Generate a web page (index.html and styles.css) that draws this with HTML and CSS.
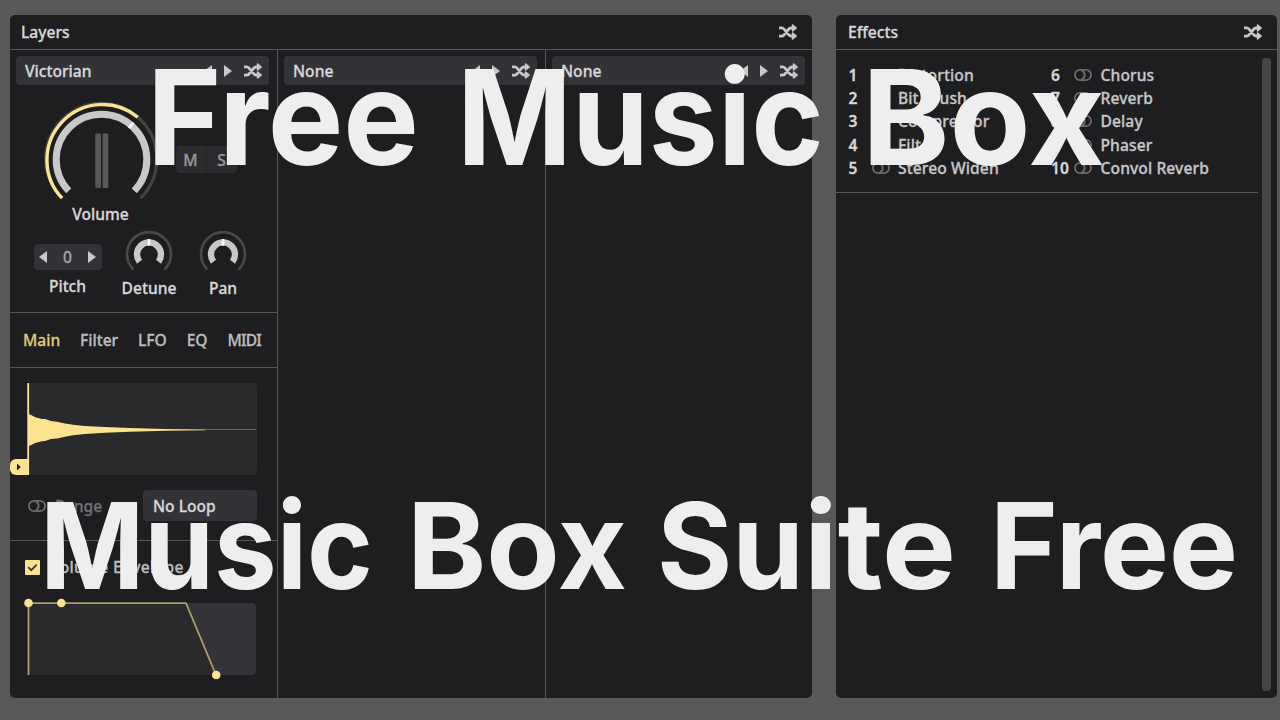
FILE: index.html
```html
<!DOCTYPE html>
<html lang="en">
<head>
    <meta charset="UTF-8">
    <meta name="viewport" content="width=device-width, initial-scale=1.0">
    <title>Free Music Box</title>
    <link rel="stylesheet" href="styles.css">
</head>
<body>

<!-- shared icons -->
<svg class="defs">
    <symbol id="shuffle" viewBox="0 0 18 16">
        <path d="M0 3.9h2.8c1.4 0 2 .8 2.9 2l3.4 4.2c.9 1.2 1.6 1.9 3 1.9H14M0 12.1h2.8c1.4 0 2-.8 2.9-2l3.4-4.2c.9-1.2 1.6-1.9 3-1.9H14" fill="none" stroke="currentColor" stroke-width="2.8"/>
        <path d="M13.6 1l3.6 3-3.6 3zM13.6 9l3.6 3-3.6 3z" fill="currentColor" stroke="currentColor" stroke-width="1.6" stroke-linejoin="round"/>
    </symbol>
    <symbol id="toggle" viewBox="0 0 18 12">
        <rect x=".9" y=".9" width="16.2" height="10.2" rx="5.1" fill="none" stroke="currentColor" stroke-width="1.8"/>
        <path d="M7.6 1.4a5 5 0 0 1 0 9.2" fill="none" stroke="currentColor" stroke-width="1.8"/>
    </symbol>
    <symbol id="prev" viewBox="0 0 8 12"><path d="M8 0v12L0 6z" fill="currentColor"/></symbol>
    <symbol id="next" viewBox="0 0 8 12"><path d="M0 0v12l8-6z" fill="currentColor"/></symbol>
    <symbol id="knob" viewBox="0 0 48 42">
        <path d="M8.4 38.6a22 22 0 1 1 31.2 0" fill="none" stroke="#49494b" stroke-width="2.6"/>
        <path d="M14.5 30.7a12 12 0 1 1 19 0" fill="none" stroke="#c8c8ca" stroke-width="6.4"/>
        <path d="M24 8v6.6" stroke="#fff" stroke-width="2.6"/>
    </symbol>
</svg>

<div class="panel layers">
    <div class="panel-header">
        <span>Layers</span>
        <svg class="shuffle"><use href="#shuffle"/></svg>
    </div>
    <div class="columns">
        <div class="column">
            <div class="preset">
                <span>Victorian</span>
                <svg class="arrow"><use href="#prev"/></svg>
                <svg class="arrow"><use href="#next"/></svg>
                <svg class="shuffle"><use href="#shuffle"/></svg>
            </div>

            <div class="knobs">
                <div class="volume-row">
                    <div class="volume">
                        <svg width="120" height="104" viewBox="0 0 120 104">
                            <path d="M21.1 99.2a55.5 55.5 0 1 1 78.4 0" fill="none" stroke="#434345" stroke-width="3.2"/>
                            <path d="M21.1 99.2A55.5 55.5 0 0 1 96.8 18.3" fill="none" stroke="#fbe38f" stroke-width="3.4"/>
                            <path d="M27.7 91.9a45.3 45.3 0 1 1 65.6 0" fill="none" stroke="#c8c8ca" stroke-width="7"/>
                            <path d="M87.8 28.8l4.8-5.2" stroke="#fff" stroke-width="2.6"/>
                            <rect x="54.3" y="34.5" width="5.7" height="54.5" rx="1" fill="#59595a"/>
                            <rect x="61.6" y="34.5" width="5.7" height="54.5" rx="1" fill="#59595a"/>
                        </svg>
                        <span>Volume</span>
                    </div>
                    <div class="mute-solo">
                        <span>M</span>
                        <span>S</span>
                    </div>
                </div>
                <div class="small-knobs">
                    <div class="control pitch">
                        <div class="stepper">
                            <svg class="arrow"><use href="#prev"/></svg>
                            <span>0</span>
                            <svg class="arrow"><use href="#next"/></svg>
                        </div>
                        <span>Pitch</span>
                    </div>
                    <div class="control">
                        <svg class="knob"><use href="#knob"/></svg>
                        <span>Detune</span>
                    </div>
                    <div class="control">
                        <svg class="knob"><use href="#knob"/></svg>
                        <span>Pan</span>
                    </div>
                </div>
            </div>

            <div class="tabs">
                <span class="active">Main</span>
                <span>Filter</span>
                <span>LFO</span>
                <span>EQ</span>
                <span>MIDI</span>
            </div>

            <div class="sample">
                <div class="waveform">
                    <svg width="228" height="92" viewBox="0 0 228 92">
                        <path d="M0 46.5h228" stroke="#6b675a" stroke-width="1"/>
                        <path d="M0 30.5l3 1.5 5 2.4 6 1.5 3 .2 6 2 6 .7 8 1.7 8 1.2 12 1.2 20 1.2 25 1 35 1 40 .7v.4l-40 .6-35 .9-25 1-20 1.4-12 1.2-8 1.5-8 1.6-6 .6-6 2-3 .3-6 1.4-5 2.2-3 1.6z" fill="#fbe38f"/>
                        <path d="M.2 0v92" stroke="#fbe38f" stroke-width="1.8"/>
                    </svg>
                    <svg class="start-handle" width="19" height="16" viewBox="0 0 19 16">
                        <path d="M19 0H6a6 6 0 0 0-6 6v4a6 6 0 0 0 6 6h13z" fill="#fbe38f"/>
                        <path d="M7 4.6v7L10.8 8z" fill="#1e1e20"/>
                    </svg>
                </div>
                <div class="loop-row">
                    <svg class="toggle"><use href="#toggle"/></svg>
                    <span class="dim">Range</span>
                    <div class="loop-select">No Loop</div>
                </div>
            </div>

            <div class="envelope">
                <div class="envelope-title">
                    <svg width="15" height="15" viewBox="0 0 15 15">
                        <rect width="15" height="15" rx="1" fill="#fbe38f"/>
                        <path d="M3.2 7.2l3 3 5.5-5.5" fill="none" stroke="#3a3629" stroke-width="1.8"/>
                    </svg>
                    <span>Volume Envelope</span>
                </div>
                <svg class="envelope-graph" width="228" height="72" viewBox="0 0 228 72">
                    <rect width="228" height="72" rx="4" fill="#343438"/>
                    <path d="M0 0h158l30 72H0z" fill="#2a2a2d"/>
                    <path d="M.5 72V.2h157.5l30 71.8" fill="none" stroke="#aa9c6c" stroke-width="1.8"/>
                    <circle cx=".5" cy="0" r="4.3" fill="#fbe38f"/>
                    <circle cx="33.3" cy="0" r="4.3" fill="#fbe38f"/>
                    <circle cx="188.2" cy="72" r="4.3" fill="#fbe38f"/>
                </svg>
            </div>
        </div>

        <div class="column">
            <div class="preset">
                <span>None</span>
                <svg class="arrow"><use href="#prev"/></svg>
                <svg class="arrow"><use href="#next"/></svg>
                <svg class="shuffle"><use href="#shuffle"/></svg>
            </div>
        </div>

        <div class="column">
            <div class="preset">
                <span>None</span>
                <svg class="arrow"><use href="#prev"/></svg>
                <svg class="arrow"><use href="#next"/></svg>
                <svg class="shuffle"><use href="#shuffle"/></svg>
            </div>
        </div>
    </div>
</div>

<div class="panel effects">
    <div class="panel-header">
        <span>Effects</span>
        <svg class="shuffle"><use href="#shuffle"/></svg>
    </div>
    <div class="effects-body">
        <div class="effects-list">
            <div class="effect"><b>1</b><svg class="toggle"><use href="#toggle"/></svg><span>Distortion</span></div>
            <div class="effect"><b>2</b><svg class="toggle"><use href="#toggle"/></svg><span>Bit Crush</span></div>
            <div class="effect"><b>3</b><svg class="toggle"><use href="#toggle"/></svg><span>Compressor</span></div>
            <div class="effect"><b>4</b><svg class="toggle"><use href="#toggle"/></svg><span>Filter</span></div>
            <div class="effect"><b>5</b><svg class="toggle"><use href="#toggle"/></svg><span>Stereo Widen</span></div>
            <div class="effect"><b>6</b><svg class="toggle"><use href="#toggle"/></svg><span>Chorus</span></div>
            <div class="effect"><b>7</b><svg class="toggle"><use href="#toggle"/></svg><span>Reverb</span></div>
            <div class="effect"><b>8</b><svg class="toggle"><use href="#toggle"/></svg><span>Delay</span></div>
            <div class="effect"><b>9</b><svg class="toggle"><use href="#toggle"/></svg><span>Phaser</span></div>
            <div class="effect"><b>10</b><svg class="toggle"><use href="#toggle"/></svg><span>Convol Reverb</span></div>
        </div>
        <div class="scrollbar"></div>
    </div>
</div>

<!-- headline over the whole screen -->
<svg class="headline" viewBox="0 0 1280 720">
    <text x="147" y="164.5" textLength="272" lengthAdjust="spacingAndGlyphs">Free</text>
    <text x="457" y="164.5" textLength="367" lengthAdjust="spacingAndGlyphs">Music</text>
    <text x="862" y="164.5" textLength="243" lengthAdjust="spacingAndGlyphs">Box</text>
    <text class="lower" x="40" y="588.5" textLength="333" lengthAdjust="spacingAndGlyphs">Music</text>
    <text class="lower" x="407" y="588.5" textLength="220" lengthAdjust="spacingAndGlyphs">Box</text>
    <text class="lower" y="588.5"><tspan x="657" textLength="147" lengthAdjust="spacingAndGlyphs">Su</tspan><tspan x="804" textLength="152" lengthAdjust="spacingAndGlyphs">ite</tspan></text>
    <text class="lower" x="990" y="588.5" textLength="248" lengthAdjust="spacingAndGlyphs">Free</text>
</svg>

</body>
</html>
```
FILE: styles.css
```css
* {
    box-sizing: border-box;
}

body {
    margin: 0;
    width: 1280px;
    height: 720px;
    overflow: hidden;
    padding: 15px 3px 22px 10px;
    display: flex;
    gap: 24px;
    background-color: #585858;
    color: #d6d6d8;
    font-family: "Noto Sans", sans-serif;
    font-size: 15.6px;
    font-weight: 500;
    line-height: 20px;
    -webkit-text-stroke: 0.3px currentColor;
    position: relative;
}

svg {
    display: block;
    flex: none;
    overflow: visible;
}

.defs {
    position: absolute;
    width: 0;
    height: 0;
}

.panel {
    background-color: #1e1e20;
    border-radius: 5px;
    height: 683px;
    display: flex;
    flex-direction: column;
}

.layers {
    width: 802px;
}

.effects {
    width: 441px;
}

.panel-header {
    height: 35px;
    border-bottom: 1px solid #58585a;
    display: flex;
    justify-content: space-between;
    align-items: center;
    padding: 0 15px 0 11px;
}

.effects .panel-header {
    padding-left: 12px;
}

.shuffle {
    width: 18px;
    height: 16px;
    color: #c8c8ca;
}

.arrow {
    width: 8px;
    height: 12px;
    color: #c8c8ca;
}

.toggle {
    width: 18px;
    height: 12px;
    color: #6c6c6e;
}

.columns {
    flex: 1;
    display: grid;
    grid-template-columns: 268px 268px 266px;
}

.column {
    border-right: 1px solid #58585a;
}

.column:last-child {
    border-right: none;
}

.preset {
    height: 29px;
    margin: 6px 8px 0 6px;
    padding: 0 7px 0 9px;
    border-radius: 4px;
    background-color: #333337;
    display: flex;
    align-items: center;
    gap: 12px;
}

.column:last-child .preset {
    margin-right: 7px;
}

.preset span {
    flex: 1;
}

.knobs {
    height: 228px;
    border-bottom: 1px solid #58585a;
}

.volume-row {
    display: flex;
    padding: 14px 0 0 30.5px;
    height: 146px;
}

.volume {
    display: flex;
    flex-direction: column;
    align-items: center;
    gap: 1px;
    width: 120px;
}

.mute-solo {
    display: flex;
    width: 61px;
    height: 27px;
    margin: 47px 0 0 15px;
    border-radius: 4px;
    overflow: hidden;
    background-color: #2c2c2f;
    color: #98989a;
}

.mute-solo span {
    flex: 1;
    text-align: center;
    line-height: 28px;
}

.mute-solo span + span {
    border-left: 1px solid #242426;
}

.small-knobs {
    display: flex;
    padding-left: 20px;
}

.control {
    display: flex;
    flex-direction: column;
    align-items: center;
    width: 74px;
}

.pitch {
    width: 75px;
    margin-right: 7px;
    padding-top: 13px;
}

.knob {
    width: 48px;
    height: 42px;
    margin-bottom: 5px;
}

.stepper {
    display: flex;
    align-items: center;
    justify-content: space-between;
    width: 68px;
    height: 26px;
    padding: 0 5px;
    margin-bottom: 6px;
    border-radius: 4px;
    background-color: #333337;
}

.stepper span {
    color: #a0a0a2;
}

.tabs {
    height: 55px;
    border-bottom: 1px solid #58585a;
    display: flex;
    align-items: center;
    justify-content: space-between;
    padding: 0 16px 0 13px;
    color: #bcbcbe;
}

.tabs span:last-child {
    letter-spacing: -0.8px;
}

.tabs .active {
    color: #dcc878;
}

.sample {
    height: 173px;
    padding: 15px 20px 0 18px;
    border-bottom: 1px solid #58585a;
}

.waveform {
    position: relative;
    height: 92px;
    border-radius: 4px;
    background-color: #2a2a2d;
}

.start-handle {
    position: absolute;
    left: -18px;
    bottom: 0;
}

.loop-row {
    display: flex;
    align-items: center;
    margin-top: 15px;
}

.dim {
    color: #707072;
    margin-left: 9px;
    flex: 1;
}

.loop-select {
    width: 114px;
    height: 31px;
    padding-left: 10px;
    line-height: 33px;
    border-radius: 4px;
    background-color: #333337;
}

.envelope {
    padding: 16px 20px 0 15px;
}

.envelope-title {
    display: flex;
    align-items: center;
    gap: 10px;
    color: #bcbcbe;
    letter-spacing: 0.35px;
}

.envelope-graph {
    margin: 26px 0 0 3px;
}

.effects-body {
    flex: 1;
    display: flex;
    align-items: flex-start;
    padding-right: 6px;
}

.effects-list {
    flex: 1;
    display: grid;
    grid-template-columns: 202.5px 1fr;
    grid-template-rows: repeat(5, 23.3px);
    grid-auto-flow: column;
    padding: 13px 0 13px 12.5px;
    border-bottom: 1px solid #58585a;
}

.effect {
    display: flex;
    align-items: center;
}

.effect b {
    width: 23px;
    font-weight: 600;
}

.effect span {
    margin-left: 8.5px;
    color: #c6c6c8;
    letter-spacing: 0.1px;
}

.scrollbar {
    width: 9px;
    height: 633px;
    margin: 8px 0 0 4px;
    border-radius: 4px;
    background-color: #454547;
}

.headline {
    position: absolute;
    left: 0;
    top: 0;
    width: 1280px;
    height: 720px;
    fill: #eeeeee;
    font-family: Inter, sans-serif;
    font-weight: 700;
    font-size: 132px;
    -webkit-text-stroke: 0;
}

.headline .lower {
    font-size: 120px;
}
```
